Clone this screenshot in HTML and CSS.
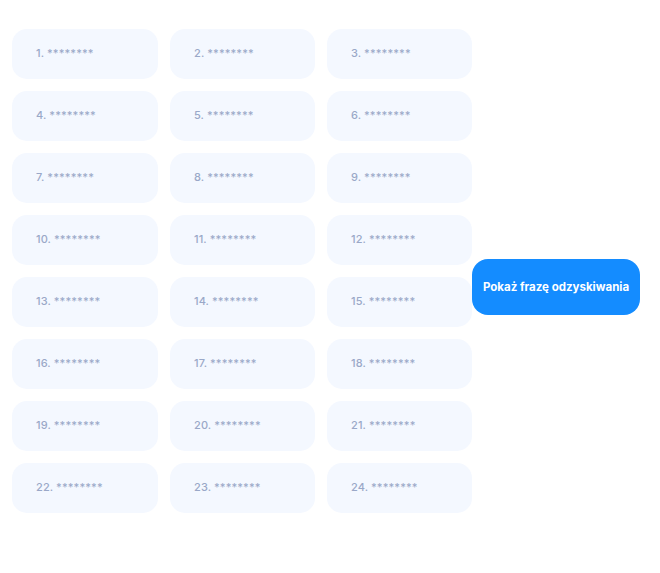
FILE: index.html
```html
<!DOCTYPE html>
<html lang="pl">
<head>
<meta charset="utf-8">
<link rel="stylesheet" href="styles.css">
</head>
<body>
<div class="wrap">
  <div class="grid">
    <div class="word">1. ********</div>
    <div class="word">2. ********</div>
    <div class="word">3. ********</div>
    <div class="word">4. ********</div>
    <div class="word">5. ********</div>
    <div class="word">6. ********</div>
    <div class="word">7. ********</div>
    <div class="word">8. ********</div>
    <div class="word">9. ********</div>
    <div class="word">10. ********</div>
    <div class="word">11. ********</div>
    <div class="word">12. ********</div>
    <div class="word">13. ********</div>
    <div class="word">14. ********</div>
    <div class="word">15. ********</div>
    <div class="word">16. ********</div>
    <div class="word">17. ********</div>
    <div class="word">18. ********</div>
    <div class="word">19. ********</div>
    <div class="word">20. ********</div>
    <div class="word">21. ********</div>
    <div class="word">22. ********</div>
    <div class="word">23. ********</div>
    <div class="word">24. ********</div>
  </div>
  <button class="reveal">Pokaż frazę odzyskiwania</button>
</div>
</body>
</html>
```
FILE: styles.css
```css
html, body {
  margin: 0;
  padding: 0;
  background: #ffffff;
}
body {
  font-family: Inter, "Noto Sans", sans-serif;
}
.wrap {
  display: flex;
  align-items: center;
  padding: 29px 0 0 12px;
}
.grid {
  width: 460px;
  display: grid;
  grid-template-columns: 146px 145px 145px;
  grid-auto-rows: 50px;
  column-gap: 12px;
  row-gap: 12px;
  padding-bottom: 32px;
}
.word {
  background: #f4f8ff;
  border-radius: 15px;
  box-sizing: border-box;
  padding: 17px 0 0 24px;
  font-size: 11px;
  line-height: 14px;
  color: #9aa8c8;
  font-weight: 500;
  letter-spacing: 0.1px;
}
.reveal {
  width: 168px;
  height: 56px;
  border: none;
  border-radius: 16px;
  background: #148cff;
  color: #ffffff;
  font-family: Inter, "Noto Sans", sans-serif;
  font-size: 11.5px;
  font-weight: 700;
  letter-spacing: 0;
  padding: 0;
  cursor: pointer;
}
```
